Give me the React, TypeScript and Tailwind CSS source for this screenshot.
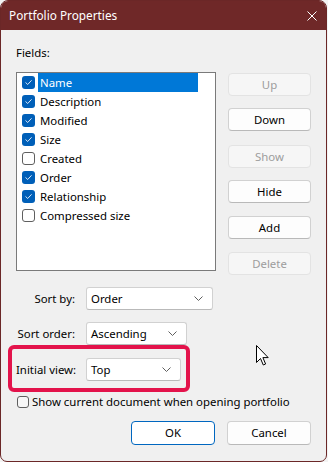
import React from "react";

const font = { fontFamily: '"Segoe UI", "Noto Sans", "Open Sans", sans-serif' };

function Check({ checked }: { checked: boolean }) {
  if (!checked) {
    return <span className="block h-[13px] w-[13px] shrink-0 rounded-[3px] border border-[#5f5f5f] bg-white" />;
  }
  return (
    <span className="flex h-[13px] w-[13px] shrink-0 items-center justify-center rounded-[3px] bg-[#005fb8]">
      <svg width="9" height="9" viewBox="0 0 9 9" fill="none">
        <path d="M1.8 4.7 L3.7 6.5 L7.3 2.6" stroke="#dbe8f7" strokeWidth="1" strokeLinecap="round" strokeLinejoin="round" />
      </svg>
    </span>
  );
}

function Chevron() {
  return (
    <svg width="9" height="5" viewBox="0 0 9 5" fill="none" className="shrink-0">
      <path d="M0.5 0.5 L4.5 4.5 L8.5 0.5" stroke="#5f5f5f" strokeWidth="1" />
    </svg>
  );
}

function Btn({ label, disabled, primary, className = "" }: { label: string; disabled?: boolean; primary?: boolean; className?: string }) {
  const base = "flex h-[23px] shrink-0 items-center justify-center rounded-[4px] border text-[11.4px]";
  if (disabled) return <div className={`${base} border-[#e3e3e3] bg-[#f6f6f6] text-[#9d9d9d] ${className}`}>{label}</div>;
  if (primary) return <div className={`${base} border-[#0067c0] bg-white text-black ${className}`}>{label}</div>;
  return <div className={`${base} border-[#d1d1d1] border-b-[#b9b9b9] bg-[#fdfdfd] text-black ${className}`}>{label}</div>;
}

function Select({ value, width }: { value: string; width: string }) {
  return (
    <div className={`flex h-[23px] ${width} items-center justify-between rounded-[3px] border border-[#d1d1d1] border-b-[#b9b9b9] bg-white pl-[4px] pr-[9px] text-black`}>
      <span>{value}</span>
      <Chevron />
    </div>
  );
}

const fields: [string, boolean][] = [
  ["Name", true],
  ["Description", true],
  ["Modified", true],
  ["Size", true],
  ["Created", false],
  ["Order", true],
  ["Relationship", true],
  ["Compressed size", false],
];

export default function App() {
  return (
    <div className="relative h-[462px] w-[328px] bg-[#f3f3f3]" style={font}>
      <div className="flex h-[462px] w-[327px] flex-col overflow-hidden rounded-t-[8px] rounded-b-[7px] border border-[#6b2727] bg-[#f0f0f0]">
        <div className="flex h-[29px] shrink-0 items-center justify-between bg-[#6f2828] pl-[8px] pr-[9px] text-[11.8px] text-white">
          <span>Portfolio Properties</span>
          <svg width="10" height="10" viewBox="0 0 10 10">
            <path d="M0.5 0.5 L9.5 9.5 M9.5 0.5 L0.5 9.5" stroke="#ffffff" strokeWidth="1" />
          </svg>
        </div>

        <div className="flex flex-col whitespace-nowrap pl-[15px] text-[11.4px] text-black">
          <div className="mt-[15px] h-[16px] leading-[16px]">Fields:</div>

          <div className="mt-[11px] flex h-[199px] items-start">
            <div className="h-[199px] w-[200px] border border-[#7a7a7a] bg-white">
              {fields.map(([name, on], i) => (
                <div key={name} className="flex h-[19px] items-center pl-[5px]">
                  <Check checked={on} />
                  <span
                    className={`ml-[3px] flex h-[19px] items-center pl-[2px] ${i === 0 ? "w-[160px] bg-[#0078d7] text-white" : ""}`}
                  >
                    {name}
                  </span>
                </div>
              ))}
            </div>
            <div className="ml-[12px] flex w-[83px] flex-col pt-[1px]">
              <Btn label="Up" disabled />
              <Btn label="Down" className="mt-[12px]" />
              <Btn label="Show" disabled className="mt-[14px]" />
              <Btn label="Hide" className="mt-[12px]" />
              <Btn label="Add" className="mt-[13px]" />
              <Btn label="Delete" disabled className="mt-[13px]" />
            </div>
          </div>

          <div className="mt-[16px] flex items-center">
            <span className="w-[59px] text-right">Sort by:</span>
            <div className="ml-[11px]">
              <Select value="Order" width="w-[127px]" />
            </div>
          </div>

          <div className="mt-[12px] flex items-center">
            <span className="w-[59px] text-right">Sort order:</span>
            <div className="ml-[11px]">
              <Select value="Ascending" width="w-[101px]" />
            </div>
          </div>

          <div className="-ml-[8px] w-[182px] rounded-[6px] border-[4px] border-[#e3134b] pb-[7px] pl-[4px] pt-[9px]">
            <div className="flex items-center">
              <span className="w-[59px] text-right">Initial view:</span>
              <div className="ml-[11px]">
                <Select value="Top" width="w-[95px]" />
              </div>
            </div>
          </div>

          <div className="mt-[2px] flex h-[16px] items-center pl-[1px]">
            <span className="block h-[12px] w-[12px] rounded-[3px] border border-[#5f5f5f] bg-[#f7f7f7]" />
            <span className="ml-[3px]">Show current document when opening portfolio</span>
          </div>

          <div className="mt-[11px] flex justify-end gap-[12px] pr-[15px]">
            <Btn label="OK" primary className="h-[24px] w-[84px]" />
            <Btn label="Cancel" className="h-[24px] w-[84px]" />
          </div>
        </div>
      </div>

      <svg className="absolute left-[256px] top-[345px]" width="13" height="22" viewBox="0 0 13 22">
        <path d="M0.5 0.5 L0.5 17.5 L4.5 13.5 L7.3 20 L9.6 19 L6.9 12.6 L12.2 12.6 Z" fill="#ffffff" stroke="#000000" strokeWidth="1" strokeLinejoin="round" />
      </svg>
    </div>
  );
}
